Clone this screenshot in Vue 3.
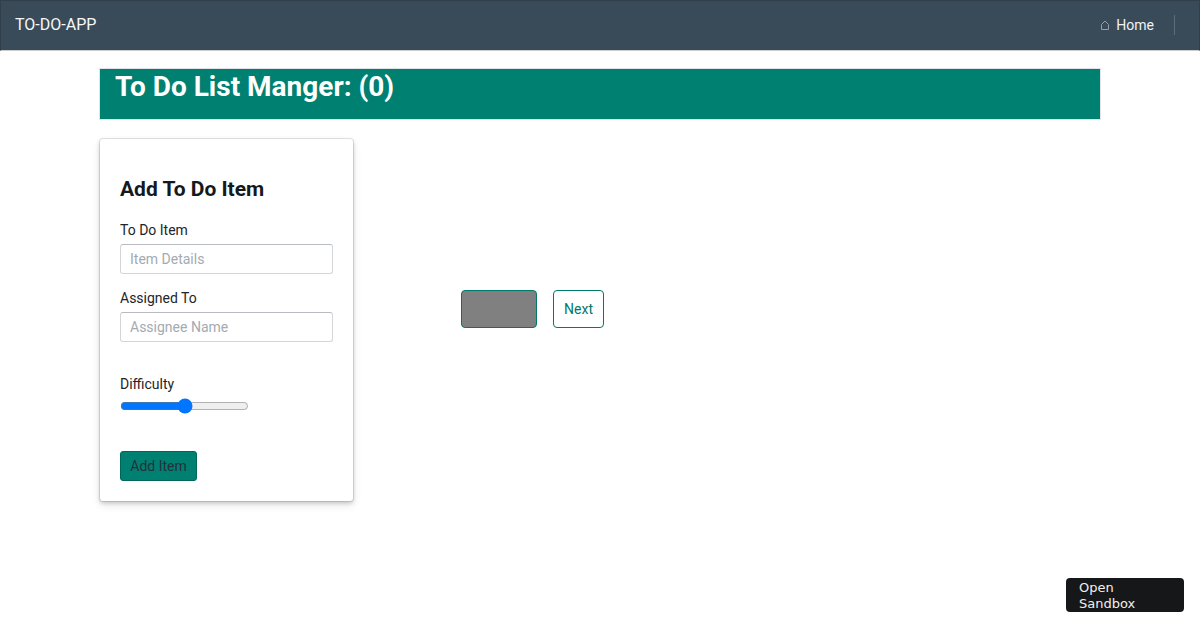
<script setup>
import { ref } from 'vue';

const difficulty = ref(50);
const itemCount = ref(0);
</script>

<template>
  <div class="page">
    <nav class="navbar">
      <span class="brand">TO-DO-APP</span>
      <div class="nav-right">
        <svg class="home-icon" width="10" height="11" viewBox="0 0 10 11">
          <path d="M1.5 9.5 H8.5 V4.5 L5 1 L1.5 4.5 Z" fill="none" stroke="#939ea7" stroke-width="1" />
        </svg>
        <span class="home">Home</span>
        <span class="divider"></span>
      </div>
    </nav>

    <main class="content">
      <header class="title-bar">
        <h1>To Do List Manger: ({{ itemCount }})</h1>
      </header>

      <div class="columns">
        <form class="card" @submit.prevent>
          <h2>Add To Do Item</h2>
          <label class="field">
            <span>To Do Item</span>
            <input type="text" placeholder="Item Details" />
          </label>
          <label class="field">
            <span>Assigned To</span>
            <input type="text" placeholder="Assignee Name" />
          </label>
          <label class="field range-field">
            <span>Difficulty</span>
            <input v-model="difficulty" type="range" min="0" max="100" class="range" />
          </label>
          <button type="submit" class="add">Add Item</button>
        </form>

        <div class="pager">
          <button type="button" class="prev"></button>
          <button type="button" class="next">Next</button>
        </div>
      </div>
    </main>

    <a class="sandbox">Open Sandbox</a>
  </div>
</template>

<style>
html,
body {
  margin: 0;
  background: #fff;
}
</style>

<style scoped>
.page {
  position: relative;
  height: 630px;
  overflow: hidden;
  font-family: Roboto, "Liberation Sans", sans-serif;
  color: #212529;
}

.navbar {
  box-sizing: border-box;
  height: 51px;
  padding: 0 24px 2px 15px;
  display: flex;
  align-items: center;
  justify-content: space-between;
  background: #394b59;
  border: 1px solid #313f4b;
  border-bottom: 1px solid #c9cdd0;
}

.brand {
  font-size: 16px;
  color: #f5f8fa;
  margin-left: -1px;
}

.nav-right {
  display: flex;
  align-items: center;
}

.home-icon {
  margin: 2px 6px 0 1px;
}

.home {
  font-size: 14px;
  color: #f0f3f5;
}

.divider {
  width: 1px;
  height: 20px;
  margin-left: 20px;
  background: #5c6c79;
}

.content {
  width: 1000px;
  margin: 18px auto 0;
}

.title-bar {
  box-sizing: border-box;
  height: 50px;
  padding: 1px 15px 0;
  background: #008071;
  box-shadow: 0 0 0 1px rgba(16, 22, 60, 0.12);
}

h1 {
  margin: 0;
  font-size: 28px;
  line-height: 33px;
  font-weight: 700;
  color: #fff;
}

.columns {
  display: flex;
  align-items: flex-start;
  margin-top: 20px;
}

.card {
  box-sizing: border-box;
  width: 253px;
  height: 362px;
  padding: 38px 20px 20px;
  display: flex;
  flex-direction: column;
  align-items: flex-start;
  background: #fff;
  border-radius: 3px;
  box-shadow: 0 0 0 1px rgba(16, 22, 26, 0.1), 0 2px 4px rgba(16, 22, 26, 0.2), 0 4px 10px rgba(16, 22, 26, 0.1);
}

h2 {
  margin: 0 0 20px;
  font-size: 21px;
  line-height: 24px;
  font-weight: 700;
  color: #14191e;
}

.field {
  display: flex;
  flex-direction: column;
  width: 100%;
  margin-bottom: 15px;
  font-size: 14px;
  line-height: 18px;
}

.field span {
  margin-bottom: 5px;
}

.field input[type="text"] {
  box-sizing: border-box;
  width: 213px;
  height: 30px;
  padding: 0 9px;
  font-family: inherit;
  font-size: 14px;
  color: #182026;
  background: #fff;
  border: 1px solid #d3d6d9;
  border-top-color: #b8bcc0;
  border-radius: 3px;
  outline: none;
}

.field input::placeholder {
  color: #a3abb1;
  opacity: 1;
}

.range-field {
  margin-top: 18px;
  margin-bottom: 0;
}

.range-field span {
  margin-bottom: 3px;
}

.range {
  margin: 2px 0;
  width: 129px;
}

.add {
  box-sizing: border-box;
  margin-top: 35px;
  width: 77px;
  height: 30px;
  padding: 0;
  font-family: inherit;
  font-size: 14px;
  color: #24303a;
  background: #008071;
  border: 1px solid #00665a;
  border-radius: 3px;
}

.pager {
  display: flex;
  gap: 16px;
  margin: 151px 0 0 108px;
}

.pager button {
  box-sizing: border-box;
  height: 38px;
  padding: 0;
  font-family: inherit;
  font-size: 14px;
  border: 1px solid #00796b;
  border-radius: 4px;
}

.prev {
  width: 76px;
  background: #808080;
}

.next {
  width: 51px;
  color: #00796b;
  background: #fff;
}

.sandbox {
  position: absolute;
  left: 1066px;
  top: 578px;
  box-sizing: border-box;
  width: 118px;
  height: 34px;
  padding: 2px 13px;
  font-family: "DejaVu Sans", sans-serif;
  font-size: 13px;
  line-height: 16px;
  color: #f0f0f0;
  background: #151719;
  border-radius: 4px;
}
</style>
